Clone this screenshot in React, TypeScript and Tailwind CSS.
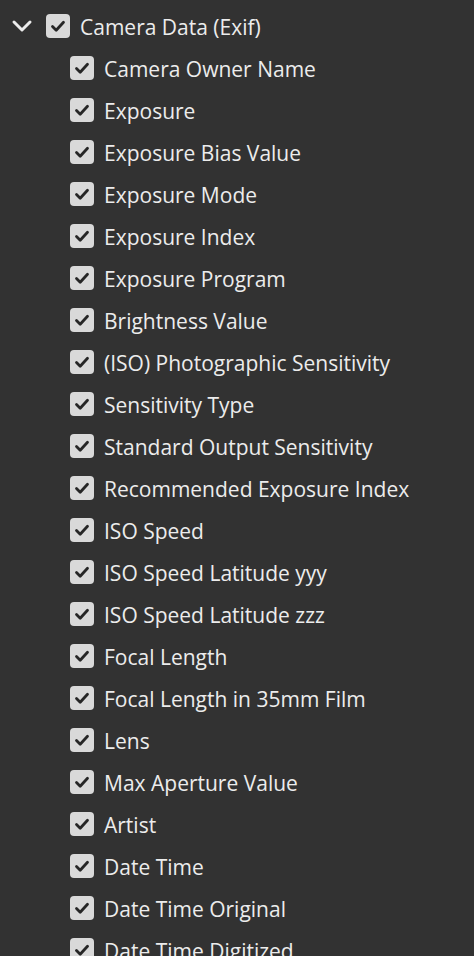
const fields = [
  'Camera Owner Name',
  'Exposure',
  'Exposure Bias Value',
  'Exposure Mode',
  'Exposure Index',
  'Exposure Program',
  'Brightness Value',
  '(ISO) Photographic Sensitivity',
  'Sensitivity Type',
  'Standard Output Sensitivity',
  'Recommended Exposure Index',
  'ISO Speed',
  'ISO Speed Latitude yyy',
  'ISO Speed Latitude zzz',
  'Focal Length',
  'Focal Length in 35mm Film',
  'Lens',
  'Max Aperture Value',
  'Artist',
  'Date Time',
  'Date Time Original',
  'Date Time Digitized',
]

const Check = () => (
  <div className="w-6 h-6 rounded-[4px] bg-[#d9d9d9] shrink-0">
    <svg width="24" height="24" viewBox="0 0 24 24" fill="none">
      <path d="M6.5 12.5 L10.2 16.2 L17.5 8.2" stroke="#262626" strokeWidth="2.8" strokeLinecap="round" strokeLinejoin="round" />
    </svg>
  </div>
)

export default function App() {
  return (
    <div className="w-[474px] h-[956px] overflow-hidden bg-[#323232] text-[#ececec] font-['Open_Sans',sans-serif] text-[21px]">
      <div className="h-[42px] mt-[5px] flex items-center">
        <svg className="ml-[11px] shrink-0" width="22" height="14" viewBox="0 0 22 14" fill="none">
          <path d="M3 3 L11 11 L19 3" stroke="#ececec" strokeWidth="3" strokeLinecap="round" strokeLinejoin="round" />
        </svg>
        <div className="ml-[13px]"><Check /></div>
        <span className="ml-[10px] pt-[4px]">Camera Data (Exif)</span>
      </div>
      {fields.map(f => (
        <div key={f} className="h-[42px] flex items-center pl-[70px]">
          <Check />
          <span className="ml-[10px] pt-[4px]">{f}</span>
        </div>
      ))}
    </div>
  )
}
